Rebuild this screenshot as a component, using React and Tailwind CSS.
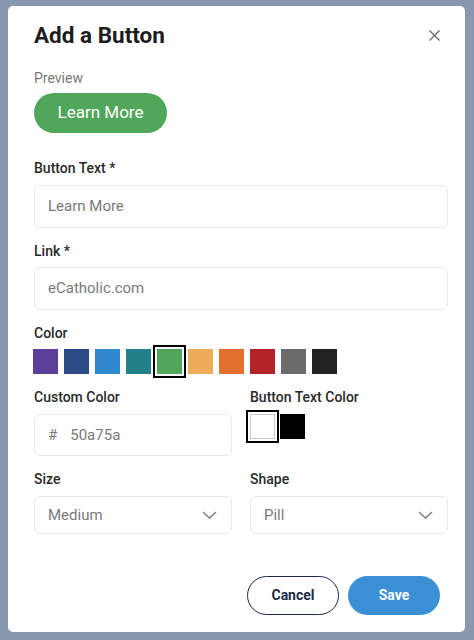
import { useState } from "react";

const swatches = [
  "#5b3f9a",
  "#2b4a86",
  "#3189cf",
  "#22808a",
  "#50a75a",
  "#eeac5b",
  "#e3702f",
  "#b22428",
  "#6b6b6b",
  "#222222",
];

function Chevron() {
  return (
    <svg width="15" height="8" viewBox="0 0 15 8" fill="none">
      <path d="M1 1l6.5 6L14 1" stroke="#7a7a7a" strokeWidth="1.3" />
    </svg>
  );
}

export default function App() {
  const [color, setColor] = useState("#50a75a");
  const [textColor, setTextColor] = useState("white");

  return (
    <div
      className="h-[640px] w-full bg-[#8898ae] pt-[6px] pl-[8px]"
      style={{ fontFamily: "Roboto, 'Liberation Sans', sans-serif" }}
    >
      <div className="w-[457px] h-[626px] bg-white rounded-[5px] pl-[26px] pr-[17px] pt-[15px] pb-[17px] flex flex-col">
        <div className="flex items-center justify-between">
          <h2 className="text-[22.5px] leading-[28px] font-bold text-[#1d1d1d]">
            Add a Button
          </h2>
          <button type="button" className="mr-[8px] mt-[1px]">
            <svg width="11" height="11" viewBox="0 0 11 11">
              <path d="M0.5 0.5l10 10M10.5 0.5l-10 10" stroke="#6e6e6e" strokeWidth="1.4" />
            </svg>
          </button>
        </div>

        <p className="mt-[19px] text-[14px] leading-[20px] text-[#777]">Preview</p>
        <div className="mt-[5px]">
          <span
            className="inline-flex items-center justify-center w-[133px] h-[40px] rounded-full text-[17px]"
            style={{ backgroundColor: color, color: textColor === "white" ? "#fff" : "#000" }}
          >
            Learn More
          </span>
        </div>

        <label className="mt-[25px] mb-[7px] text-[14px] leading-[20px] font-medium text-[#2a2a2a]">
          Button Text *
        </label>
        <div className="h-[43px] border border-[#e9e9e9] rounded-[6px] flex items-center pl-[13px] text-[15px] text-[#7a7a7a]">
          Learn More
        </div>

        <label className="mt-[13px] mb-[6px] text-[14px] leading-[20px] font-medium text-[#2a2a2a]">
          Link *
        </label>
        <div className="h-[43px] border border-[#e9e9e9] rounded-[6px] flex items-center pl-[13px] text-[15px] text-[#7a7a7a]">
          eCatholic.com
        </div>

        <label className="mt-[13px] mb-[6px] text-[14px] leading-[20px] font-medium text-[#2a2a2a]">
          Color
        </label>
        <div className="flex gap-[6px] -ml-[1px]">
          {swatches.map((c) => (
            <button
              key={c}
              type="button"
              onClick={() => setColor(c)}
              className={`w-[25px] h-[25px] ${
                color === c ? "outline-2 outline-offset-[2px] outline-black" : ""
              }`}
              style={{ backgroundColor: c }}
            />
          ))}
        </div>

        <div className="mt-[13px] flex gap-[18px]">
          <div className="w-[198px] flex flex-col">
            <label className="mb-[7px] text-[14px] leading-[20px] font-medium text-[#2a2a2a]">
              Custom Color
            </label>
            <div className="h-[42px] border border-[#e9e9e9] rounded-[6px] flex items-center pl-[13px] text-[15px] text-[#7a7a7a]">
              <span className="mr-[13px]">#</span>
              50a75a
            </div>
          </div>
          <div className="flex flex-col">
            <label className="mb-[6px] text-[14px] leading-[20px] font-medium text-[#2a2a2a]">
              Button Text Color
            </label>
            <div className="flex gap-[5px] pt-[1px]">
              <button
                type="button"
                onClick={() => setTextColor("white")}
                className={`w-[25px] h-[25px] bg-white border border-[#c8c8c8] ${
                  textColor === "white" ? "outline-2 outline-offset-[2px] outline-black" : ""
                }`}
              />
              <button
                type="button"
                onClick={() => setTextColor("black")}
                className={`w-[25px] h-[25px] bg-black ${
                  textColor === "black" ? "outline-2 outline-offset-[2px] outline-black" : ""
                }`}
              />
            </div>
          </div>
        </div>

        <div className="mt-[13px] flex gap-[18px]">
          <div className="w-[198px] flex flex-col">
            <label className="mb-[7px] text-[14px] leading-[20px] font-medium text-[#2a2a2a]">
              Size
            </label>
            <div className="h-[38px] border border-[#e9e9e9] rounded-[6px] flex items-center justify-between pl-[13px] pr-[14px] text-[15px] text-[#7a7a7a]">
              Medium
              <Chevron />
            </div>
          </div>
          <div className="w-[198px] flex flex-col">
            <label className="mb-[7px] text-[14px] leading-[20px] font-medium text-[#2a2a2a]">
              Shape
            </label>
            <div className="h-[38px] border border-[#e9e9e9] rounded-[6px] flex items-center justify-between pl-[13px] pr-[14px] text-[15px] text-[#7a7a7a]">
              Pill
              <Chevron />
            </div>
          </div>
        </div>

        <div className="mt-auto flex justify-end gap-[9px] pr-[8px]">
          <button
            type="button"
            className="w-[92px] h-[39px] rounded-full border border-[#1c2a48] text-[14px] font-bold text-[#1c2a48]"
          >
            Cancel
          </button>
          <button
            type="button"
            className="w-[92px] h-[39px] rounded-full bg-[#3a8fd5] text-[14px] font-bold text-white"
          >
            Save
          </button>
        </div>
      </div>
    </div>
  );
}
